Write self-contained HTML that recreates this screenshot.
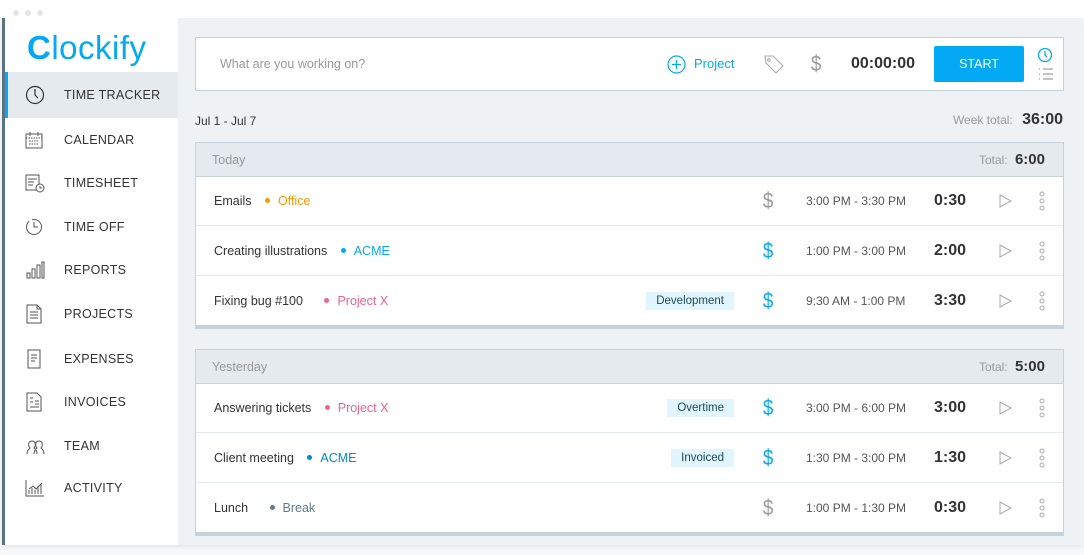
<!DOCTYPE html>
<html><head><meta charset="utf-8"><style>
*{box-sizing:border-box;margin:0;padding:0}
body{width:1084px;height:555px;background:#f7f8f9;font-family:"Liberation Sans",sans-serif;position:relative;overflow:hidden}
.top{position:absolute;left:0;top:0;width:1084px;height:18px;background:#fff}
.dot{position:absolute;top:10px;width:6px;height:6px;border-radius:3px;background:#e3e6e9}
.frame{position:absolute;left:2px;top:18px;width:1080px;height:527px;background:#eef2f5;box-shadow:0 2px 4px rgba(0,0,0,.08)}
.lbar{position:absolute;left:2px;top:18px;width:3px;height:527px;background:#5b7382}
.side{position:absolute;left:5px;top:18px;width:173px;height:527px;background:#fff}
.logo{position:absolute;left:22px;top:12px;font-size:33px;color:#03a9f4;line-height:36px;letter-spacing:.5px}
.nav{position:absolute;left:0;width:173px;height:46px;font-size:12.5px;color:#333;letter-spacing:.3px}
.nav span{position:absolute;left:59px;top:50%;transform:translateY(-50%)}
.nav svg{position:absolute;left:20px;top:50%;transform:translateY(-50%)}
.act{background:#e4eaee;border-left:3px solid #03a9f4}
.card{position:absolute;left:195px;width:869px;background:#fff;border:1px solid #c6d2d9}
.hdr{position:absolute;left:195px;width:869px;height:35px;background:#e4eaee;border:1px solid #c6d2d9;border-bottom:none}
.hdr .l{position:absolute;left:16px;top:10px;font-size:12.5px;color:#999}
.hdr .r{position:absolute;right:18px;top:8px;font-size:12px;color:#999}
.hdr .r b{font-size:15px;color:#333;margin-left:4px}
.row{position:absolute;left:0;width:867px;height:49px;border-bottom:1px solid #e4eaee;font-size:12.5px;color:#333}
.row .d{position:absolute;left:18px;top:17px}
.row .p{margin-left:10px}
.row .p i{display:inline-block;width:5px;height:5px;border-radius:3px;margin-right:8px;vertical-align:2px}
.tag{position:absolute;right:329px;top:15px;height:18px;line-height:18px;background:#e1f5fe;color:#1b4a5c;font-size:11.5px;padding:0 10px}
.usd{position:absolute;left:566px;top:11px;font-size:22px;color:#999;transform:scaleX(.85)}
.usd.b{color:#03a9f4}
.tm{position:absolute;left:610px;top:17px;font-size:12px;color:#555}
.du{position:absolute;left:738px;top:15px;font-size:16px;font-weight:bold;color:#333}
.pl{position:absolute;left:802px;top:17px}
.mo{position:absolute;left:843px;top:14px}
.thick{position:absolute;left:195px;width:869px;height:4px;background:#c6d2d9}
</style></head><body>
<div class="top"><div class="dot" style="left:13px"></div><div class="dot" style="left:25px"></div><div class="dot" style="left:37px"></div></div>
<div class="frame"></div>
<div class="side">
<div class="logo"><span style="font-weight:bold">C</span>lockify</div>
<div class="nav act" style="top:54px"><svg width="20" height="20" viewBox="0 0 20 20" style="left:17px"><circle cx="10" cy="10" r="8.5" fill="none" stroke="#333" stroke-width="1.2"/><path d="M10 4v6l3 3" fill="none" stroke="#333" stroke-width="1.2"/></svg><span style="left:56px">TIME TRACKER</span></div>
<div class="nav" style="top:99px"><svg width="18" height="18" viewBox="0 0 18 18"><rect x="1" y="3" width="16" height="14" fill="none" stroke="#555"/><path d="M1 7h16M5 1v4M13 1v4M4 10h10M4 13h10" stroke="#555" stroke-dasharray="1.5 1"/></svg><span>CALENDAR</span></div>
<div class="nav" style="top:142px"><svg width="20" height="20" viewBox="0 0 20 20"><rect x="1" y="2" width="13" height="15" fill="none" stroke="#555"/><path d="M3 6h9M3 9h6M3 12h5" stroke="#555"/><circle cx="15" cy="15" r="4" fill="#fff" stroke="#555"/><path d="M15 13v2h2" stroke="#555" fill="none"/></svg><span>TIMESHEET</span></div>
<div class="nav" style="top:186px"><svg width="18" height="18" viewBox="0 0 18 18"><circle cx="9" cy="9" r="7.5" fill="none" stroke="#555" stroke-dasharray="30 3"/><path d="M9 4v5h4" fill="none" stroke="#555"/></svg><span>TIME OFF</span></div>
<div class="nav" style="top:229px"><svg width="20" height="18" viewBox="0 0 20 18"><path d="M2 12h3v5H2zM7 8h3v9H7zM12 4h3v13h-3zM17 1h2v16h-2z" fill="none" stroke="#555"/></svg><span>REPORTS</span></div>
<div class="nav" style="top:273px"><svg width="18" height="20" viewBox="0 0 18 20"><path d="M2 1h10l4 4v14H2z M12 1v4h4" fill="none" stroke="#555"/><path d="M5 8h8M5 11h8M5 14h8" stroke="#555"/></svg><span>PROJECTS</span></div>
<div class="nav" style="top:318px"><svg width="18" height="20" viewBox="0 0 18 20"><path d="M3 1h12v18H3z" fill="none" stroke="#555"/><path d="M6 6h6M6 9h6M6 12h4" stroke="#555"/></svg><span>EXPENSES</span></div>
<div class="nav" style="top:361px"><svg width="18" height="20" viewBox="0 0 18 20"><path d="M2 1h10l4 4v14H2z" fill="none" stroke="#555"/><path d="M5 6h3M5 10h3M10 9h4M10 12h4M5 15h9" stroke="#555"/></svg><span>INVOICES</span></div>
<div class="nav" style="top:405px"><svg width="20" height="18" viewBox="0 0 20 18"><path d="M2 17c0-4 2-5 3-6-2-2-2-7 2-7s4 5 2 7c1 1 3 2 3 6M9 17c0-4 2-5 3-6-2-2-2-7 2-7s4 5 2 7c1 1 3 2 3 6" fill="none" stroke="#555"/></svg><span>TEAM</span></div>
<div class="nav" style="top:447px"><svg width="20" height="18" viewBox="0 0 20 18"><path d="M1 1v16h18" fill="none" stroke="#555"/><path d="M4 15V11M7 15V9M10 15V11M13 15V7M16 15V5M4 10l4-3 3 3 6-6" fill="none" stroke="#555"/></svg><span>ACTIVITY</span></div>
</div>
<div class="lbar"></div>

<div class="card" style="top:37px;height:54px">
<div style="position:absolute;left:24px;top:19px;font-size:12.5px;color:#999">What are you working on?</div>
<svg style="position:absolute;left:471px;top:17px" width="19" height="19" viewBox="0 0 19 19"><circle cx="9.5" cy="9.5" r="8.5" fill="none" stroke="#03a9f4" stroke-width="1.2"/><path d="M9.5 5v9M5 9.5h9" stroke="#03a9f4" stroke-width="1.2"/></svg>
<div style="position:absolute;left:498px;top:18px;font-size:13px;color:#03a9f4">Project</div>
<svg style="position:absolute;left:567px;top:16px" width="22" height="20" viewBox="0 0 22 20"><path d="M2 2h8l10 10-7 7L3 9z" fill="none" stroke="#aaa" stroke-width="1.1"/><circle cx="6" cy="6" r="1.3" fill="none" stroke="#aaa"/></svg>
<div style="position:absolute;left:614px;top:13px;font-size:22px;color:#999;transform:scaleX(.85)">$</div>
<div style="position:absolute;left:655px;top:17px;font-size:16px;font-weight:bold;color:#333">00:00:00</div>
<div style="position:absolute;left:738px;top:8px;width:90px;height:36px;background:#03a9f4;border-radius:2px;color:#fff;font-size:12.5px;text-align:center;line-height:36px">START</div>
<svg style="position:absolute;left:841px;top:9px" width="16" height="16" viewBox="0 0 16 16"><circle cx="8" cy="8" r="6.5" fill="none" stroke="#03a9f4" stroke-width="1.3"/><path d="M8 4v4l2 2" fill="none" stroke="#03a9f4" stroke-width="1.3"/></svg>
<svg style="position:absolute;left:842px;top:29px" width="16" height="14" viewBox="0 0 16 14"><path d="M1 2h1M1 7h1M1 12h1M5 2h10M5 7h10M5 12h10" stroke="#888"/></svg>
</div>

<div style="position:absolute;left:195px;top:114px;font-size:12px;color:#333">Jul 1 - Jul 7</div>
<div style="position:absolute;right:21px;top:111px;font-size:12px;color:#999">Week total: <b style="font-size:16px;color:#333;margin-left:6px">36:00</b></div>

<div class="hdr" style="top:142px"><div class="l">Today</div><div class="r">Total: <b>6:00</b></div></div>
<div class="card" style="top:176px;height:150px;border-bottom:none">
<div class="row" style="top:0"><div class="d">Emails <span class="p" style="color:#ff9800"><i style="background:#ff9800"></i>Office</span></div><div class="usd">$</div><div class="tm">3:00 PM - 3:30 PM</div><div class="du">0:30</div>
<svg class="pl" width="14" height="14" viewBox="0 0 14 14"><path d="M2 1l11 6-11 6z" fill="none" stroke="#aaa"/></svg><svg class="mo" width="6" height="20" viewBox="0 0 6 20"><circle cx="3" cy="3" r="2" fill="none" stroke="#aaa"/><circle cx="3" cy="10" r="2" fill="none" stroke="#aaa"/><circle cx="3" cy="17" r="2" fill="none" stroke="#aaa"/></svg></div>
<div class="row" style="top:50px"><div class="d">Creating illustrations <span class="p" style="color:#03a9f4"><i style="background:#03a9f4"></i>ACME</span></div><div class="usd b">$</div><div class="tm">1:00 PM - 3:00 PM</div><div class="du">2:00</div>
<svg class="pl" width="14" height="14" viewBox="0 0 14 14"><path d="M2 1l11 6-11 6z" fill="none" stroke="#aaa"/></svg><svg class="mo" width="6" height="20" viewBox="0 0 6 20"><circle cx="3" cy="3" r="2" fill="none" stroke="#aaa"/><circle cx="3" cy="10" r="2" fill="none" stroke="#aaa"/><circle cx="3" cy="17" r="2" fill="none" stroke="#aaa"/></svg></div>
<div class="row" style="top:100px;border:none"><div class="d">Fixing bug #100 <span class="p" style="color:#f06292;margin-left:18px"><i style="background:#f06292"></i>Project X</span></div><div class="tag">Development</div><div class="usd b">$</div><div class="tm">9:30 AM - 1:00 PM</div><div class="du">3:30</div>
<svg class="pl" width="14" height="14" viewBox="0 0 14 14"><path d="M2 1l11 6-11 6z" fill="none" stroke="#aaa"/></svg><svg class="mo" width="6" height="20" viewBox="0 0 6 20"><circle cx="3" cy="3" r="2" fill="none" stroke="#aaa"/><circle cx="3" cy="10" r="2" fill="none" stroke="#aaa"/><circle cx="3" cy="17" r="2" fill="none" stroke="#aaa"/></svg></div>
</div>
<div class="thick" style="top:325px"></div>

<div class="hdr" style="top:349px"><div class="l">Yesterday</div><div class="r">Total: <b>5:00</b></div></div>
<div class="card" style="top:383px;height:150px;border-bottom:none">
<div class="row" style="top:0"><div class="d">Answering tickets <span class="p" style="color:#f06292"><i style="background:#f06292"></i>Project X</span></div><div class="tag">Overtime</div><div class="usd b">$</div><div class="tm">3:00 PM - 6:00 PM</div><div class="du">3:00</div>
<svg class="pl" width="14" height="14" viewBox="0 0 14 14"><path d="M2 1l11 6-11 6z" fill="none" stroke="#aaa"/></svg><svg class="mo" width="6" height="20" viewBox="0 0 6 20"><circle cx="3" cy="3" r="2" fill="none" stroke="#aaa"/><circle cx="3" cy="10" r="2" fill="none" stroke="#aaa"/><circle cx="3" cy="17" r="2" fill="none" stroke="#aaa"/></svg></div>
<div class="row" style="top:50px"><div class="d">Client meeting <span class="p" style="color:#0288d1"><i style="background:#0288d1"></i>ACME</span></div><div class="tag">Invoiced</div><div class="usd b">$</div><div class="tm">1:30 PM - 3:00 PM</div><div class="du">1:30</div>
<svg class="pl" width="14" height="14" viewBox="0 0 14 14"><path d="M2 1l11 6-11 6z" fill="none" stroke="#aaa"/></svg><svg class="mo" width="6" height="20" viewBox="0 0 6 20"><circle cx="3" cy="3" r="2" fill="none" stroke="#aaa"/><circle cx="3" cy="10" r="2" fill="none" stroke="#aaa"/><circle cx="3" cy="17" r="2" fill="none" stroke="#aaa"/></svg></div>
<div class="row" style="top:100px;border:none"><div class="d">Lunch <span class="p" style="color:#607d8b;margin-left:18px"><i style="background:#607d8b"></i>Break</span></div><div class="usd">$</div><div class="tm">1:00 PM - 1:30 PM</div><div class="du">0:30</div>
<svg class="pl" width="14" height="14" viewBox="0 0 14 14"><path d="M2 1l11 6-11 6z" fill="none" stroke="#aaa"/></svg><svg class="mo" width="6" height="20" viewBox="0 0 6 20"><circle cx="3" cy="3" r="2" fill="none" stroke="#aaa"/><circle cx="3" cy="10" r="2" fill="none" stroke="#aaa"/><circle cx="3" cy="17" r="2" fill="none" stroke="#aaa"/></svg></div>
</div>
<div class="thick" style="top:532px"></div>
</body></html>
